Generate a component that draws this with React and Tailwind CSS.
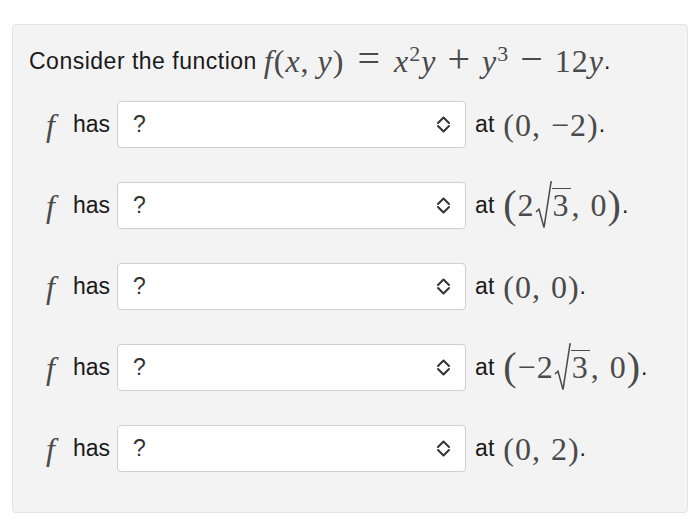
import React from "react";

const serif = "font-['Liberation_Serif','Times_New_Roman',serif]";

function I({ children }) {
  return <span className="italic">{children}</span>;
}

function Op({ children, gap }) {
  return <span className={`text-[40px] leading-none font-light ${gap}`}>{children}</span>;
}

function Sqrt3() {
  return (
    <span className="relative inline-block ml-[17px] mr-[1px] tracking-normal">
      <svg
        className="absolute right-full top-0 h-full w-[17px]"
        viewBox="0 0 17 34"
        preserveAspectRatio="none"
        fill="none"
      >
        <path
          d="M1 22 L4 20 L9 33 L16 0.75 L17 0.75"
          stroke="#4a4a4a"
          strokeWidth="1.5"
          strokeLinejoin="miter"
          vectorEffect="non-scaling-stroke"
        />
      </svg>
      <span className="inline-block border-t-[1.5px] border-[#4a4a4a] leading-none pl-[1px] pr-[2px]">3</span>
    </span>
  );
}

function Chevrons() {
  return (
    <svg width="15" height="19" viewBox="0 0 15 19" fill="none">
      <path d="M2 8 L7.5 2.5 L13 8" stroke="#333" strokeWidth="2" strokeLinecap="round" strokeLinejoin="round" />
      <path d="M2 11 L7.5 16.5 L13 11" stroke="#333" strokeWidth="2" strokeLinecap="round" strokeLinejoin="round" />
    </svg>
  );
}

function Pt({ a, b, big }) {
  const paren = big ? "text-[40px] leading-none font-light" : "";
  return (
    <span className="inline-flex items-center">
      <span className={paren}>(</span>
      {a}
      <span className="mr-[10px]">,</span>
      {b}
      <span className={paren}>)</span>
    </span>
  );
}

const points = [
  <Pt a="0" b="−2" />,
  <Pt a={<>2<Sqrt3 /></>} b="0" big />,
  <Pt a="0" b="0" />,
  <Pt a={<>−2<Sqrt3 /></>} b="0" big />,
  <Pt a="0" b="2" />,
];

function Row({ point }) {
  return (
    <div className="flex items-center h-[47px] pl-[17px]">
      <span className={`${serif} italic text-[32px] text-[#4a4a4a] w-[27px]`}>f</span>
      <span className="text-[23px] text-[#1a1a1a] mr-[7px]">has</span>
      <div className="w-[349px] h-[47px] bg-white border border-[#cfcfcf] rounded-[4px] flex items-center justify-between pl-[15px] pr-[14px]">
        <span className="text-[23px] text-[#333]">?</span>
        <Chevrons />
      </div>
      <span className="text-[23px] text-[#1a1a1a] ml-[9px] mr-[9px]">at</span>
      <span className={`${serif} text-[32px] tracking-[1px] text-[#4a4a4a] whitespace-nowrap`}>{point}</span>
      <span className="text-[23px] text-[#1a1a1a]">.</span>
    </div>
  );
}

export default function App() {
  return (
    <div className="w-[700px] h-[529px] bg-white pt-[24px] px-[12px] font-['Liberation_Sans',Arial,sans-serif]">
      <div className="h-[489px] bg-[#f3f3f3] border border-[#e3e3e3] rounded-[4px] pl-[16px] pt-[20px]">
        <div className="flex items-center h-[32px] text-[23px] text-[#1a1a1a] whitespace-nowrap">
          <span className="mr-[7px] tracking-[0.5px]">Consider the function</span>
          <span className={`${serif} text-[32px] tracking-[1px] text-[#4a4a4a]`}>
            <I>f</I>(<I>x</I>
            <span className="mr-[8px]">,</span>
            <I>y</I>)<Op gap="mx-[13px]">=</Op>
            <I>x</I>
            <sup className="text-[22px]">2</sup>
            <I>y</I>
            <Op gap="mx-[11px]">+</Op>
            <I>y</I>
            <sup className="text-[22px]">3</sup>
            <Op gap="mx-[11px]">−</Op>12<I>y</I>
          </span>
          <span>.</span>
        </div>
        <div className="flex flex-col gap-[34px] mt-[24px]">
          {points.map((p, i) => (
            <Row key={i} point={p} />
          ))}
        </div>
      </div>
    </div>
  );
}
